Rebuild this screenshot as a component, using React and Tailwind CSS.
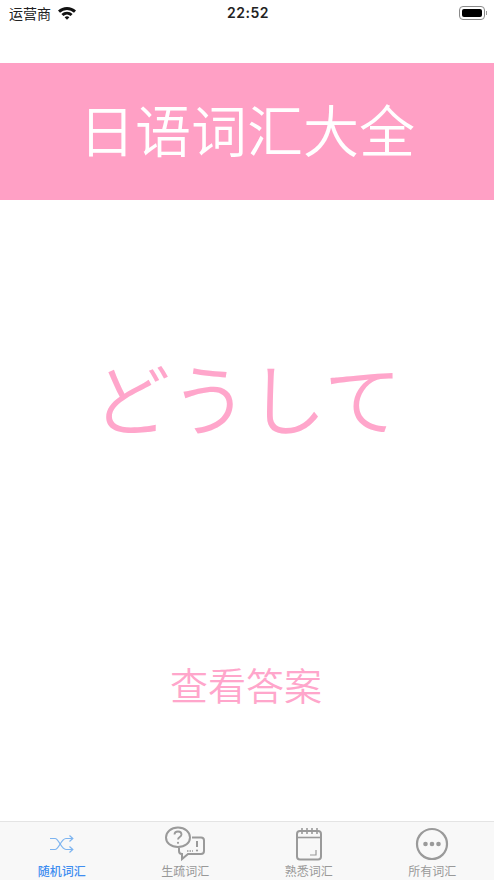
import React from 'react';

const CJK = 'font-["Noto_Sans_CJK_SC",sans-serif]';

function Wifi() {
  return (
    <svg width="20" height="14" viewBox="0 0 20 14" className="ml-[6px]">
      <path d="M1 4.6 A13 13 0 0 1 19 4.6 L17 6.7 A10.2 10.2 0 0 0 3 6.7 Z" fill="#111" />
      <path d="M4.4 8 A8.2 8.2 0 0 1 15.6 8 L13.6 10 A5.4 5.4 0 0 0 6.4 10 Z" fill="#111" />
      <path d="M7.6 11.2 A3.6 3.6 0 0 1 12.4 11.2 L10 13.7 Z" fill="#111" />
    </svg>
  );
}

function Battery() {
  return (
    <div className="flex items-center">
      <div className="w-[26px] h-[14px] rounded-[4px] border border-[#8a8a8a] p-[2px]">
        <div className="w-full h-full rounded-[2px] bg-black" />
      </div>
      <div className="w-[1px] h-[4px] ml-[1px] bg-[#999]" />
    </div>
  );
}

function ShuffleIcon() {
  return (
    <svg width="26" height="22" viewBox="0 0 26 22" fill="none" stroke="#7db4f0" strokeWidth="1.2">
      <path d="M1 5.5 H6 C10 5.5 12 16.5 17 16.5 H23" />
      <path d="M1 16.5 H6 C10 16.5 12 5.5 17 5.5 H23" />
      <path d="M20.5 2.5 L23.8 5.5 L20.5 8.5" />
      <path d="M20.5 13.5 L23.8 16.5 L20.5 19.5" />
    </svg>
  );
}

function ChatIcon() {
  return (
    <svg width="42" height="36" viewBox="0 0 42 36" fill="none" stroke="#9a9a9a" strokeWidth="2">
      <path d="M14 1.5 C7 1.5 2 6 2 11.5 C2 17 7 21 14 21 C21 21 26 17 26 11.5 C26 6 21 1.5 14 1.5 Z" />
      <path d="M28 11.5 H37 C39 11.5 40 12.5 40 14.5 V25 C40 27 39 28 37 28 H24 L18 33 V28 C16 28 15 27 15 25 V22" />
      <path d="M10.5 8.5 C10.5 6.5 12 5.5 14 5.5 C16 5.5 17.5 6.8 17.5 8.5 C17.5 11 14 11 14 13.5" strokeWidth="1.8" />
      <circle cx="14" cy="16.8" r="1.1" fill="#9a9a9a" stroke="none" />
      <path d="M33 15 V21" strokeWidth="2" />
      <circle cx="33" cy="24.5" r="1.1" fill="#9a9a9a" stroke="none" />
      <path d="M23 25 H29" strokeWidth="1.4" strokeDasharray="1.5 1" />
    </svg>
  );
}

function NotepadIcon() {
  return (
    <svg width="28" height="34" viewBox="0 0 28 34" fill="none" stroke="#9a9a9a" strokeWidth="2">
      <rect x="2" y="4" width="24" height="28.5" rx="3" />
      <path d="M2 10.5 H26" strokeWidth="1.6" />
      <path d="M7 1 V7 M12 1 V7 M17 1 V7 M22 1 V7" strokeWidth="1.6" />
      <path d="M15 28 H21 V23" strokeWidth="1.2" />
    </svg>
  );
}

function MoreIcon() {
  return (
    <svg width="34" height="34" viewBox="0 0 34 34" fill="none" stroke="#9a9a9a" strokeWidth="2.2">
      <circle cx="17" cy="17" r="15" />
      <circle cx="10.5" cy="17" r="2.3" fill="#9a9a9a" stroke="none" />
      <circle cx="17" cy="17" r="2.3" fill="#9a9a9a" stroke="none" />
      <circle cx="23.5" cy="17" r="2.3" fill="#9a9a9a" stroke="none" />
    </svg>
  );
}

const TABS = [
  { label: '随机词汇', icon: ShuffleIcon, active: true },
  { label: '生疏词汇', icon: ChatIcon },
  { label: '熟悉词汇', icon: NotepadIcon },
  { label: '所有词汇', icon: MoreIcon },
];

export default function App() {
  return (
    <div className={`w-[494px] h-[880px] flex flex-col bg-white overflow-hidden ${CJK}`}>
      <div className="h-[63px] shrink-0">
        <div className="h-[26px] grid grid-cols-3 items-center pl-[9px] pr-[7px]">
          <div className="flex items-center">
            <span className="text-[14px] leading-none text-[#222]">运营商</span>
            <Wifi />
          </div>
          <span className='text-center text-[14px] leading-none font-semibold tracking-[0.5px] text-[#222] font-["Inter",sans-serif]'>22:52</span>
          <div className="flex justify-end">
            <Battery />
          </div>
        </div>
      </div>

      <div className="h-[137px] shrink-0 bg-[#ffa0c5] flex items-center justify-center pb-[7px]">
        <h1 className="text-[56px] leading-none font-[350] text-white">日语词汇大全</h1>
      </div>

      <div className="flex-1 flex flex-col items-center">
        <p className='mt-[136px] text-[78px] leading-[120px] font-[350] text-[#ffa6cb] font-["Noto_Sans_CJK_JP",sans-serif]'>どうして</p>
        <p className="mt-[200px] mr-[2px] text-[38px] leading-[56px] font-[350] text-[#ffa6cb]">查看答案</p>
      </div>

      <div className="h-[59px] shrink-0 grid grid-cols-4 bg-[#f8f8f8] border-t border-[#e4e4e4]">
        {TABS.map((t) => {
          const Icon = t.icon;
          return (
            <div key={t.label} className="flex flex-col items-center justify-end">
              <div className="h-[38px] flex items-center justify-center">
                <Icon />
              </div>
              <span className={`text-[12px] leading-[16px] mb-[1px] ${t.active ? 'text-[#3f8df0] font-medium' : 'text-[#999]'}`}>{t.label}</span>
            </div>
          );
        })}
      </div>
    </div>
  );
}
